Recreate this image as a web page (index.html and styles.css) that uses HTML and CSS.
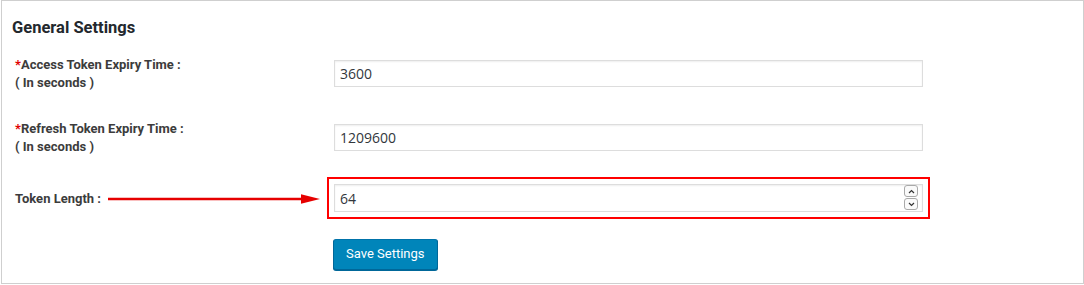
FILE: index.html
```html
<!DOCTYPE html>
<html lang="en">
<head>
<meta charset="utf-8">
<title>General Settings</title>
<link rel="stylesheet" href="styles.css">
</head>
<body>
<div class="panel">
  <h2 class="title">General Settings</h2>
  <div class="form">
    <div class="row">
      <div class="label"><span class="req">*</span>Access Token Expiry Time :<br>( In seconds )</div>
      <div class="field"><input class="text-input" type="text" value="3600"></div>
    </div>
    <div class="row">
      <div class="label"><span class="req">*</span>Refresh Token Expiry Time :<br>( In seconds )</div>
      <div class="field"><input class="text-input" type="text" value="1209600"></div>
    </div>
    <div class="row row-token">
      <div class="label label-token">
        <span>Token Length :</span>
        <svg class="arrow" width="212" height="12" viewBox="0 0 212 12" aria-hidden="true">
          <line x1="0" y1="6" x2="196" y2="6" stroke="#e60000" stroke-width="2.4"/>
          <polygon points="193,1.3 212,6 193,10.7" fill="#e60000"/>
        </svg>
      </div>
      <div class="field field-highlight">
        <input class="text-input token-input" type="text" value="64">
        <div class="spinner">
          <span class="spin-btn">
            <svg width="7" height="5" viewBox="0 0 7 5"><path d="M1 4 L3.5 1.5 L6 4" fill="none" stroke="#333" stroke-width="1.2"/></svg>
          </span>
          <span class="spin-btn">
            <svg width="7" height="5" viewBox="0 0 7 5"><path d="M1 1 L3.5 3.5 L6 1" fill="none" stroke="#333" stroke-width="1.2"/></svg>
          </span>
        </div>
      </div>
    </div>
    <div class="row row-submit">
      <div class="label"></div>
      <div class="field"><button class="btn-primary" type="button">Save Settings</button></div>
    </div>
  </div>
</div>
</body>
</html>
```

FILE: styles.css
```css
html, body {
  margin: 0;
  padding: 0;
  background: #fff;
}

body {
  font-family: Roboto, "Liberation Sans", Arial, sans-serif;
}

.panel {
  box-sizing: border-box;
  margin-left: 1px;
  width: 1083px;
  height: 284px;
  border: 1px solid #cfcfcf;
  background: #fff;
}

.title {
  margin: 0;
  padding: 17px 0 0 10px;
  font-size: 16.5px;
  line-height: 19px;
  font-weight: 700;
  color: #23282d;
}

.form {
  padding-left: 13px;
}

.row {
  display: flex;
  align-items: flex-start;
  margin-top: 28px;
}

.row:first-child {
  margin-top: 19px;
}

.label {
  box-sizing: border-box;
  width: 319px;
  flex: none;
  font-size: 13px;
  line-height: 18px;
  font-weight: 700;
  color: #3c3c3c;
}

.req {
  color: #e00000;
}

.field {
  position: relative;
  width: 589px;
  margin-top: 4px;
}

.text-input {
  display: block;
  box-sizing: border-box;
  width: 100%;
  height: 27px;
  margin: 0;
  padding: 0 5px;
  border: 1px solid #dddddd;
  border-radius: 0;
  box-shadow: inset 0 1px 2px rgba(0, 0, 0, 0.07);
  background: #fff;
  font-family: "Open Sans", Roboto, sans-serif;
  font-size: 14px;
  color: #32373c;
  outline: none;
}

.token-input {
  height: 28px;
}

.label-token {
  display: flex;
  align-items: center;
  padding-right: 14px;
  margin-top: 6px;
}

.arrow {
  margin-left: auto;
  display: block;
}

.row-token .field {
  margin-top: 0;
}

.field-highlight {
  outline: 2px solid #f00;
  outline-offset: 5px;
}

.spinner {
  position: absolute;
  right: 5px;
  top: 1px;
  display: flex;
  flex-direction: column;
  gap: 1px;
}

.spin-btn {
  box-sizing: border-box;
  width: 14px;
  height: 12px;
  border: 1px solid #a9a9a9;
  border-radius: 3px;
  background: #fafafa;
  display: flex;
  align-items: center;
  justify-content: center;
}

.row-submit {
  margin-top: 27px;
}

.row-submit .field {
  margin-top: 0;
  margin-left: -1px;
}

.btn-primary {
  box-sizing: border-box;
  height: 31px;
  padding: 0 12px 2px;
  border: 1px solid #0073aa;
  border-color: #0073aa #006799 #006799;
  border-radius: 3px;
  background: #0085ba;
  box-shadow: 0 1px 0 #006799;
  color: #fff;
  font-family: Roboto, "Liberation Sans", sans-serif;
  font-size: 13px;
  line-height: 28px;
  cursor: pointer;
}
```
